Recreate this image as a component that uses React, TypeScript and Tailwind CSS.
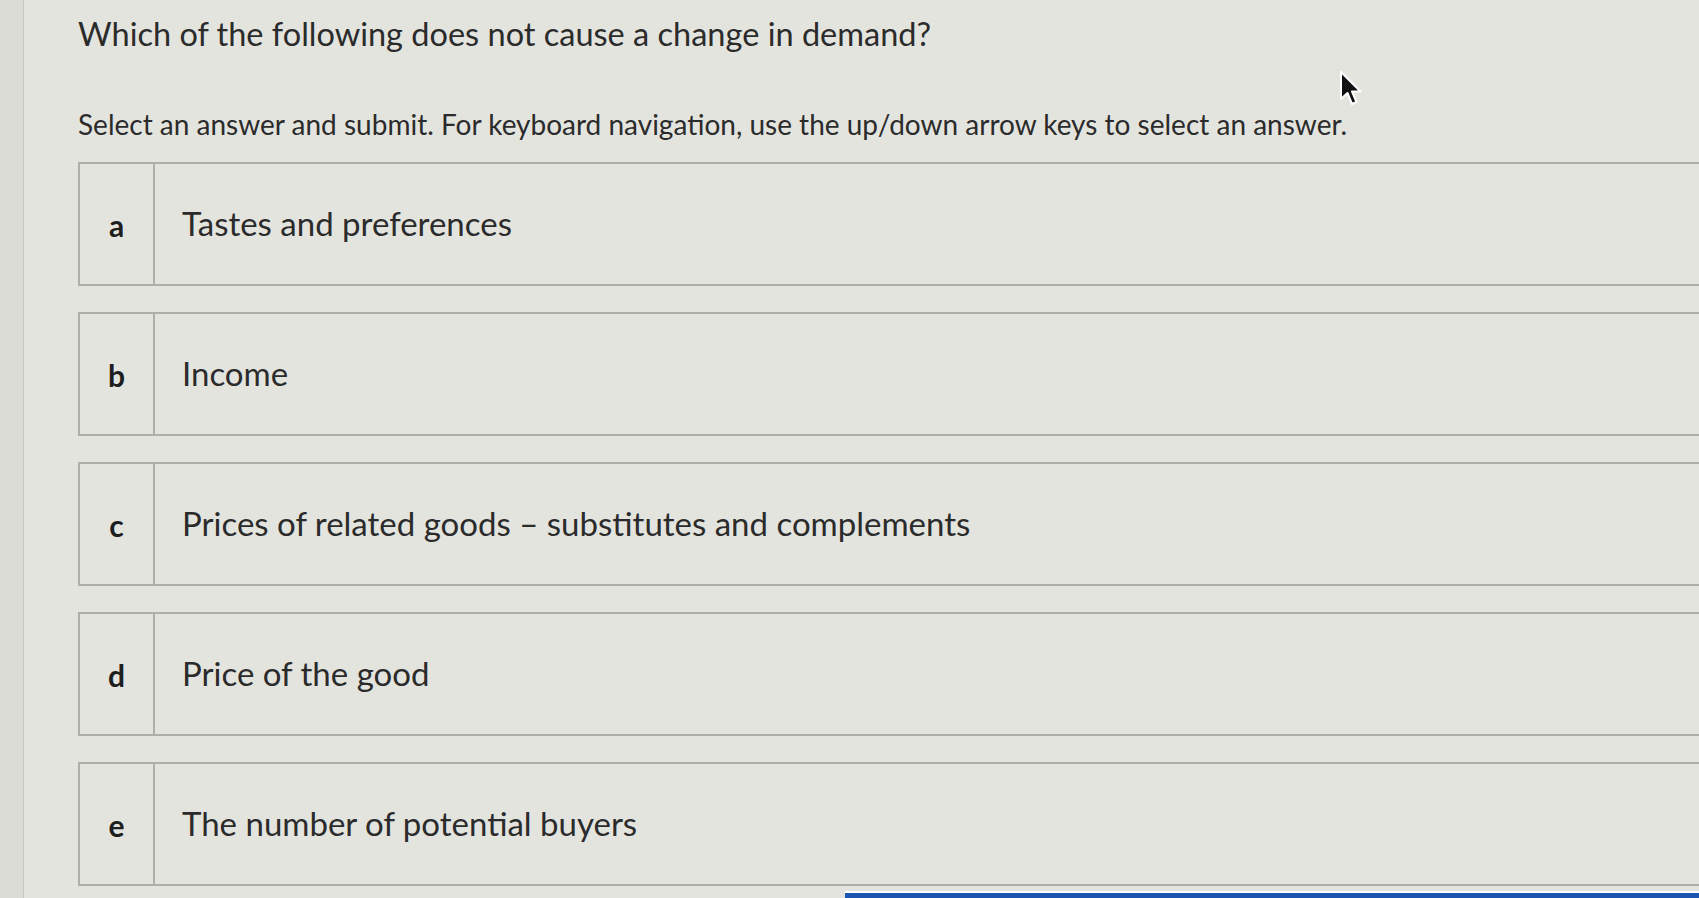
import React from 'react';

type Option = {
    key: string;
    text: string;
};

const options: Option[] = [
    { key: 'a', text: 'Tastes and preferences' },
    { key: 'b', text: 'Income' },
    { key: 'c', text: 'Prices of related goods – substitutes and complements' },
    { key: 'd', text: 'Price of the good' },
    { key: 'e', text: 'The number of potential buyers' },
];

function Cursor() {
    return (
        <svg
            className="absolute left-[1338px] top-[70px]"
            width="26"
            height="38"
            viewBox="0 0 26 38"
        >
            <path
                d="M3 2 L3 29 L9.5 23 L14 34 L18.5 32 L14 21.5 L22.5 21.5 Z"
                fill="#111"
                stroke="#fff"
                strokeWidth="2"
                strokeLinejoin="round"
            />
        </svg>
    );
}

export default function App() {
    return (
        <main
            className="relative h-[898px] w-[1699px] overflow-hidden bg-[#e4e4df] text-[#2b2b2b]"
            style={{ fontFamily: 'Lato, "Open Sans", sans-serif' }}
        >
            <div className="flex h-full">
                {/* left edge of the window */}
                <div className="w-[24px] shrink-0 border-r border-[#c9c9c4] bg-[#dcdcd7]" />

                <div className="flex-1 pl-[54px] pt-[13px]">
                    <h1 className="text-[32.5px] leading-[42px] font-normal">
                        Which of the following does not cause a change in demand?
                    </h1>
                    <p className="mt-[51px] text-[28px] leading-[36px]">
                        Select an answer and submit. For keyboard navigation, use the up/down arrow keys to select an answer.
                    </p>

                    <div className="mt-[20px] flex flex-col gap-[26px]">
                        {options.map((opt) => (
                            <div
                                key={opt.key}
                                className="flex h-[124px] border-y-2 border-l-2 border-[#aeaeaa]"
                            >
                                <div className="flex w-[75px] shrink-0 items-center justify-center border-r-2 border-[#aeaeaa] pt-[2px] text-[30px] font-bold text-[#1e1e1e]">
                                    {opt.key}
                                </div>
                                <div className="flex flex-1 items-center pl-[27px] text-[33px]">
                                    {opt.text}
                                </div>
                            </div>
                        ))}
                    </div>
                </div>
            </div>

            {/* blue bar peeking at the bottom */}
            <div className="absolute bottom-0 left-[845px] right-0 h-[7px] border-t-2 border-white bg-[#1d55b3]" />

            <Cursor />
        </main>
    );
}
